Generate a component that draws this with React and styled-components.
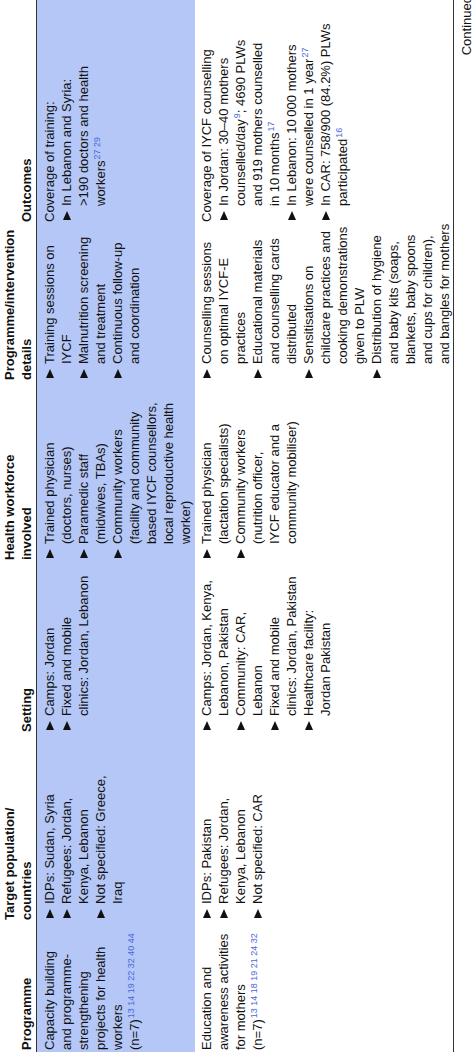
import styled, { createGlobalStyle } from "styled-components";

const GlobalStyle = createGlobalStyle`
  html, body {
    margin: 0;
    padding: 0;
    background: #ffffff;
  }
  body {
    font-family: "Liberation Sans", Arial, Helvetica, sans-serif;
    color: #111111;
  }
`;

// the table is printed sideways: we lay it out upright, then turn it
const Page = styled.div`
  width: 474px;
  height: 1052px;
  overflow: hidden;
`;

const Sheet = styled.div`
  width: 1058px;
  height: 474px;
  transform-origin: 0 0;
  transform: translateY(1052px) rotate(-90deg);
  font-size: 13px;
  line-height: 17px;
`;

const COLS = "130px 188px 172px 180px 158px 1fr";

const Row = styled.div`
  display: grid;
  grid-template-columns: ${COLS};
  padding: ${(p) => p.$pad};
  padding-left: 2px;
  background: ${(p) => (p.$shade ? "#b4c7f6" : "transparent")};
  border-bottom: ${(p) => (p.$rule ? "1px solid #333333" : "none")};
`;

const Head = styled.div`
  align-self: end;
  font-weight: bold;
  white-space: nowrap;
`;

const Cell = styled.div`
  white-space: nowrap;
`;

const Item = styled.div`
  display: flex;
  align-items: flex-start;
`;

const Mark = styled.span`
  flex: none;
  width: 0;
  height: 0;
  margin: 5px 5px 0 2px;
  border-left: 9px solid #111111;
  border-top: 4px solid transparent;
  border-bottom: 4px solid transparent;
`;

const Ref = styled.span`
  font-size: 9px;
  line-height: 0;
  color: #4a67dc;
  vertical-align: 5px;
  margin-left: 1px;
`;

const Continued = styled.div`
  margin-top: 4px;
  padding-right: 2px;
  text-align: right;
`;

const Bullets = ({ items }) =>
  items.map((it, i) => (
    <Item key={i}>
      <Mark />
      <span>{it}</span>
    </Item>
  ));

export default function App() {
  return (
    <>
      <GlobalStyle />
      <Page>
        <Sheet>
          <Row $pad="1px 0 1px" $rule>
            <Head>Programme</Head>
            <Head>
              Target population/
              <br />
              countries
            </Head>
            <Head>Setting</Head>
            <Head>
              Health workforce
              <br />
              involved
            </Head>
            <Head>
              Programme/intervention
              <br />
              details
            </Head>
            <Head>Outcomes</Head>
          </Row>

          <Row $pad="4px 0 1px" $shade>
            <Cell>
              Capacity building
              <br />
              and programme-
              <br />
              strengthening
              <br />
              projects for health
              <br />
              workers
              <br />
              (n=7)<Ref>13 14 19 22 32 40 44</Ref>
            </Cell>
            <Cell>
              <Bullets
                items={[
                  "IDPs: Sudan, Syria",
                  <>
                    Refugees: Jordan,
                    <br />
                    Kenya, Lebanon
                  </>,
                  <>
                    Not specified: Greece,
                    <br />
                    Iraq
                  </>,
                ]}
              />
            </Cell>
            <Cell>
              <Bullets
                items={[
                  "Camps: Jordan",
                  <>
                    Fixed and mobile
                    <br />
                    clinics: Jordan, Lebanon
                  </>,
                ]}
              />
            </Cell>
            <Cell>
              <Bullets
                items={[
                  <>
                    Trained physician
                    <br />
                    (doctors, nurses)
                  </>,
                  <>
                    Paramedic staff
                    <br />
                    (midwives, TBAs)
                  </>,
                  <>
                    Community workers
                    <br />
                    (facility and community
                    <br />
                    based IYCF counsellors,
                    <br />
                    local reproductive health
                    <br />
                    worker)
                  </>,
                ]}
              />
            </Cell>
            <Cell>
              <Bullets
                items={[
                  <>
                    Training sessions on
                    <br />
                    IYCF
                  </>,
                  <>
                    Malnutrition screening
                    <br />
                    and treatment
                  </>,
                  <>
                    Continuous follow-up
                    <br />
                    and coordination
                  </>,
                ]}
              />
            </Cell>
            <Cell>
              Coverage of training:
              <Bullets
                items={[
                  <>
                    In Lebanon and Syria:
                    <br />
                    &gt;190 doctors and health
                    <br />
                    workers<Ref>27 29</Ref>
                  </>,
                ]}
              />
            </Cell>
          </Row>

          <Row $pad="3px 0 0" $rule>
            <Cell>
              Education and
              <br />
              awareness activities
              <br />
              for mothers
              <br />
              (n=7)<Ref>13 14 18 19 21 24 32</Ref>
            </Cell>
            <Cell>
              <Bullets
                items={[
                  "IDPs: Pakistan",
                  <>
                    Refugees: Jordan,
                    <br />
                    Kenya, Lebanon
                  </>,
                  "Not specified: CAR",
                ]}
              />
            </Cell>
            <Cell>
              <Bullets
                items={[
                  <>
                    Camps: Jordan, Kenya,
                    <br />
                    Lebanon, Pakistan
                  </>,
                  <>
                    Community: CAR,
                    <br />
                    Lebanon
                  </>,
                  <>
                    Fixed and mobile
                    <br />
                    clinics: Jordan, Pakistan
                  </>,
                  <>
                    Healthcare facility:
                    <br />
                    Jordan Pakistan
                  </>,
                ]}
              />
            </Cell>
            <Cell>
              <Bullets
                items={[
                  <>
                    Trained physician
                    <br />
                    (lactation specialists)
                  </>,
                  <>
                    Community workers
                    <br />
                    (nutrition officer,
                    <br />
                    IYCF educator and a
                    <br />
                    community mobiliser)
                  </>,
                ]}
              />
            </Cell>
            <Cell>
              <Bullets
                items={[
                  <>
                    Counselling sessions
                    <br />
                    on optimal IYCF-E
                    <br />
                    practices
                  </>,
                  <>
                    Educational materials
                    <br />
                    and counselling cards
                    <br />
                    distributed
                  </>,
                  <>
                    Sensitisations on
                    <br />
                    childcare practices and
                    <br />
                    cooking demonstrations
                    <br />
                    given to PLW
                  </>,
                  <>
                    Distribution of hygiene
                    <br />
                    and baby kits (soaps,
                    <br />
                    blankets, baby spoons
                    <br />
                    and cups for children),
                    <br />
                    and bangles for mothers
                  </>,
                ]}
              />
            </Cell>
            <Cell>
              Coverage of IYCF counselling
              <Bullets
                items={[
                  <>
                    In Jordan: 30–40 mothers
                    <br />
                    counselled/day<Ref>9</Ref>; 4690 PLWs
                    <br />
                    and 919 mothers counselled
                    <br />
                    in 10{"\u2009"}months<Ref>17</Ref>
                  </>,
                  <>
                    In Lebanon: 10{"\u2009"}000 mothers
                    <br />
                    were counselled in 1 year<Ref>27</Ref>
                  </>,
                  <>
                    In CAR: 758/900 (84.2%) PLWs
                    <br />
                    participated<Ref>16</Ref>
                  </>,
                ]}
              />
            </Cell>
          </Row>

          <Continued>Continued</Continued>
        </Sheet>
      </Page>
    </>
  );
}
